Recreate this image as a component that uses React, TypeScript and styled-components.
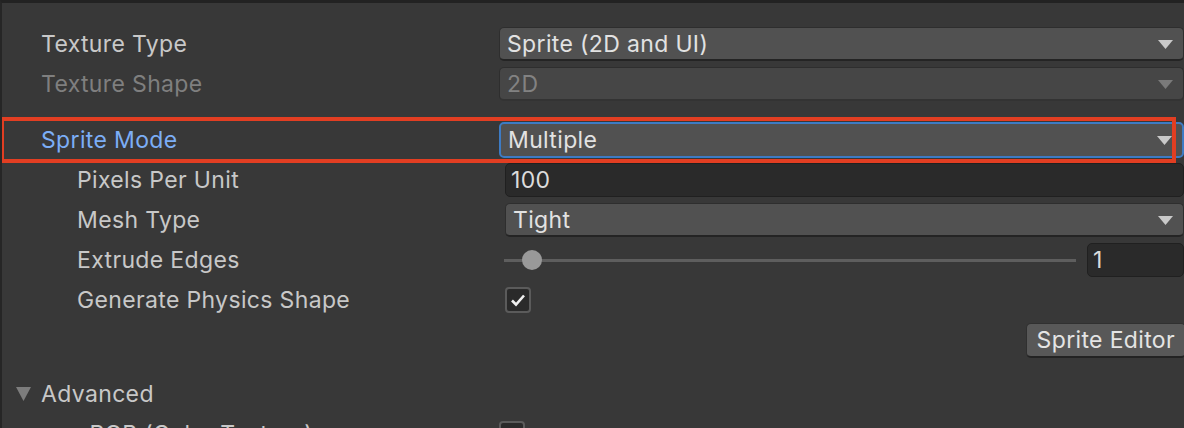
import React from 'react';
import styled, { createGlobalStyle } from 'styled-components';

const GlobalStyle = createGlobalStyle`
    html, body {
        margin: 0;
        padding: 0;
        background: #383838;
        overflow: hidden;
    }
    body {
        font-family: Inter, "Noto Sans", "Liberation Sans", sans-serif;
        font-size: 23px;
        letter-spacing: 0.35px;
    }
`

const Panel = styled.div`
    width: 1184px;
    height: 428px;
    box-sizing: border-box;
    background: #383838;
    border-top: 3px solid #222222;
    border-left: 2px solid #262626;
    padding-top: 21px;
    overflow: hidden;
`

const Row = styled.div<{ $indent?: boolean }>`
    position: relative;
    display: flex;
    align-items: center;
    height: 40px;
    padding-left: ${p => (p.$indent ? 75 : 39)}px;
`

const HighlightRow = styled(Row)`
    &::after {
        content: '';
        position: absolute;
        left: -2px;
        right: 8px;
        top: -3px;
        bottom: -3px;
        border: 4px solid #e23e22;
        pointer-events: none;
    }
`

const Label = styled.div<{ $indent?: boolean; $tone?: 'muted' | 'active' }>`
    width: ${p => (p.$indent ? 428 : 458)}px;
    flex-shrink: 0;
    color: ${p => (p.$tone === 'muted' ? '#7f7f7f' : p.$tone === 'active' ? '#7caef6' : '#c8c8c8')};
    white-space: nowrap;
`

const Field = styled.div`
    flex: 1;
    min-width: 0;
    display: flex;
    align-items: center;
`

const Dropdown = styled.div<{ $disabled?: boolean; $focused?: boolean }>`
    position: relative;
    flex: 1;
    height: ${p => (p.$focused ? 36 : 34)}px;
    box-sizing: border-box;
    display: flex;
    align-items: center;
    padding-left: 7px;
    border-radius: 5px;
    background: ${p => (p.$disabled ? '#464646' : '#515151')};
    color: ${p => (p.$disabled ? '#828282' : '#e2e2e2')};
    border: ${p => (p.$focused ? '2px solid #3d7bc4' : '1px solid #2e2e2e')};
    border-bottom-color: ${p => (p.$focused ? '#3d7bc4' : p.$disabled ? '#333333' : '#242424')};
    border-bottom-width: 2px;
`

const Arrow = styled.svg<{ $disabled?: boolean }>`
    position: absolute;
    right: 10px;
    top: 50%;
    margin-top: -4px;
    width: 15px;
    height: 9px;
    fill: ${p => (p.$disabled ? '#7a7a7a' : '#c9c9c9')};
`

const TextField = styled.div<{ $width?: number }>`
    flex: ${p => (p.$width ? `0 0 ${p.$width}px` : 1)};
    height: 34px;
    box-sizing: border-box;
    display: flex;
    align-items: center;
    padding-left: 5px;
    background: #2a2a2a;
    border: 1px solid #202020;
    border-radius: 5px;
    color: #dcdcdc;
`

const SliderTrack = styled.div`
    position: relative;
    flex: 1;
    height: 3px;
    background: #5e5e5e;
    margin-right: 11px;
    margin-left: -1px;
`

const SliderThumb = styled.div`
    position: absolute;
    top: 50%;
    width: 20px;
    height: 20px;
    margin-top: -10px;
    border-radius: 50%;
    background: #999999;
`

const Checkbox = styled.div<{ $offset?: number }>`
    width: 26px;
    height: 26px;
    box-sizing: border-box;
    margin-left: ${p => p.$offset ?? 0}px;
    background: #2a2a2a;
    border: 2px solid #5b5b5b;
    border-radius: 4px;
    display: flex;
    align-items: center;
    justify-content: center;

    svg {
        width: 18px;
        height: 18px;
        stroke: #f0f0f0;
        stroke-width: 2.6;
        fill: none;
    }
`

const Spacer = styled.div<{ $h: number }>`
    height: ${p => p.$h}px;
`

const ButtonRow = styled.div`
    display: flex;
    justify-content: flex-end;
    height: 42px;
    padding-top: 3px;
    box-sizing: border-box;
`

const Button = styled.div`
    height: 35px;
    box-sizing: border-box;
    padding: 0 10px;
    display: flex;
    align-items: center;
    background: #585858;
    border: 1px solid #303030;
    border-bottom: 2px solid #232323;
    border-radius: 5px;
    color: #e4e4e4;
    margin-right: -2px;
`

const Foldout = styled.div`
    display: flex;
    align-items: center;
    height: 40px;
    padding-left: 14px;
    color: #c8c8c8;

    svg {
        width: 15px;
        height: 14px;
        fill: #7d7d7d;
        margin-right: 10px;
    }
`

const DropArrow = ({ disabled }: { disabled?: boolean }) => (
    <Arrow $disabled={disabled} viewBox="0 0 15 9">
        <polygon points="0,0 15,0 7.5,9" />
    </Arrow>
)

const Check = () => (
    <svg viewBox="0 0 18 18">
        <polyline points="3,9.5 7,13.5 15,4.5" />
    </svg>
)

export default function App() {
    return (
        <>
            <GlobalStyle />
            <Panel>
                <Row>
                    <Label>Texture Type</Label>
                    <Field>
                        <Dropdown>
                            Sprite (2D and UI)
                            <DropArrow />
                        </Dropdown>
                    </Field>
                </Row>
                <Row>
                    <Label $tone="muted">Texture Shape</Label>
                    <Field>
                        <Dropdown $disabled>
                            2D
                            <DropArrow disabled />
                        </Dropdown>
                    </Field>
                </Row>
                <Spacer $h={16} />
                <HighlightRow>
                    <Label $tone="active">Sprite Mode</Label>
                    <Field>
                        <Dropdown $focused>
                            Multiple
                            <DropArrow />
                        </Dropdown>
                    </Field>
                </HighlightRow>
                <Row $indent>
                    <Label $indent>Pixels Per Unit</Label>
                    <Field>
                        <TextField>100</TextField>
                    </Field>
                </Row>
                <Row $indent>
                    <Label $indent>Mesh Type</Label>
                    <Field>
                        <Dropdown>
                            Tight
                            <DropArrow />
                        </Dropdown>
                    </Field>
                </Row>
                <Row $indent>
                    <Label $indent>Extrude Edges</Label>
                    <Field>
                        <SliderTrack>
                            <SliderThumb style={{ left: 18 }} />
                        </SliderTrack>
                        <TextField $width={97}>1</TextField>
                    </Field>
                </Row>
                <Row $indent>
                    <Label $indent>Generate Physics Shape</Label>
                    <Field>
                        <Checkbox>
                            <Check />
                        </Checkbox>
                    </Field>
                </Row>
                <ButtonRow>
                    <Button>Sprite Editor</Button>
                </ButtonRow>
                <Spacer $h={12} />
                <Foldout>
                    <svg viewBox="0 0 15 14">
                        <polygon points="0,0 15,0 7.5,14" />
                    </svg>
                    Advanced
                </Foldout>
                <Row $indent>
                    <Label $indent>sRGB (Color Texture)</Label>
                    <Field>
                        <Checkbox $offset={-6} />
                    </Field>
                </Row>
            </Panel>
        </>
    );
}
